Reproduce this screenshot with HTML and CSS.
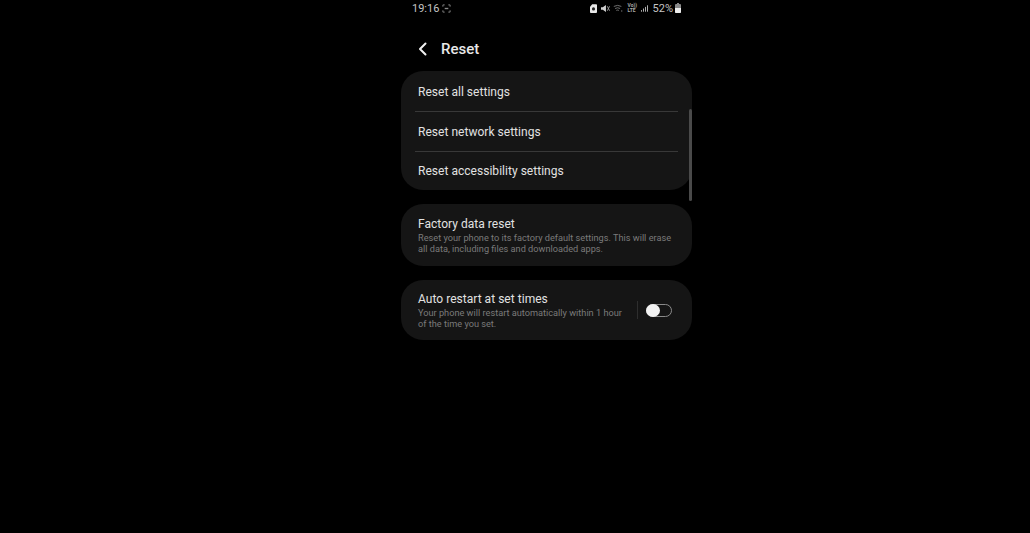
FILE: index.html
```html
<!DOCTYPE html>
<html lang="en">
<head>
    <meta charset="UTF-8">
    <meta name="viewport" content="width=device-width, initial-scale=1.0">
    <title>Reset</title>
    <link rel="stylesheet" href="styles.css">
</head>
<body>
    <div class="phone">
        <div class="status-bar">
            <div class="status-left">
                <span>19:16</span>
                <svg width="9" height="9" viewBox="0 0 10 10" fill="none" stroke="#8a8a8a" stroke-width="1">
                    <path d="M1 3V1h2M7 1h2v2M9 7v2H7M3 9H1V7"/>
                    <path d="M3 5h4" stroke-width="1.500"/>
                </svg>
            </div>
            <div class="status-right">
                <svg width="7" height="9" viewBox="0 0 8 10"><path d="M2.500 0H7a1 1 0 0 1 1 1v8a1 1 0 0 1-1 1H1a1 1 0 0 1-1-1V3z" fill="#e8e8e8"/><circle cx="4" cy="5.500" r="1.800" fill="#222"/></svg>
                <svg class="mute" width="9" height="9" viewBox="0 0 10 10" fill="#d0d0d0"><path d="M0 3.500h2L5.500 1v8L2 6.500H0z"/><path d="M7 2.500l2.500 5M9.500 2.500L7 7.500" stroke="#a0a0a0" stroke-width="1"/></svg>
                <svg width="10" height="9" viewBox="0 0 12 10" fill="none" stroke="#858585" stroke-width="1"><path d="M1 2.500q4.500-2.500 9 0M2.500 5q3-1.800 6 0M4 7.300q1.500-.8 3 0"/><path d="M10.500 7v2" stroke="#777"/></svg>
                <div class="volte">
                    <span>Vo))</span>
                    <span>LTE</span>
                </div>
                <svg width="8" height="9" viewBox="0 0 10 10" fill="#b5b5b5"><rect x="0" y="7" width="1.200" height="2"/><rect x="2.500" y="5" width="1.200" height="4"/><rect x="5" y="3" width="1.200" height="6"/><rect x="7.500" y="1" width="1.200" height="8"/></svg>
                <span class="battery-text">52%</span>
                <svg width="6" height="10" viewBox="0 0 6 10"><path d="M2 0h2v1h1a1 1 0 0 1 1 1v7a1 1 0 0 1-1 1H1a1 1 0 0 1-1-1V2a1 1 0 0 1 1-1h1z" fill="#8a8a8a"/><path d="M0 5h6v4a1 1 0 0 1-1 1H1a1 1 0 0 1-1-1z" fill="#ededed"/></svg>
            </div>
        </div>

        <div class="title-bar">
            <svg width="10" height="14" viewBox="0 0 10 14" fill="none" stroke="#f0f0f0" stroke-width="2" stroke-linecap="round" stroke-linejoin="round">
                <path d="M7.500 1.500L2 7l5.500 5.500"/>
            </svg>
            <h1>Reset</h1>
        </div>

        <div class="card card-list">
            <div class="row">Reset all settings</div>
            <div class="row">Reset network settings</div>
            <div class="row">Reset accessibility settings</div>
        </div>

        <div class="card card-info">
            <div class="info-title">Factory data reset</div>
            <div class="info-text">Reset your phone to its factory default settings. This will erase all data, including files and downloaded apps.</div>
        </div>

        <div class="card card-info card-switch">
            <div class="switch-text">
                <div class="info-title">Auto restart at set times</div>
                <div class="info-text">Your phone will restart automatically within 1 hour of the time you set.</div>
            </div>
            <div class="switch-wrap">
                <div class="switch"><div class="knob"></div></div>
            </div>
        </div>

        <div class="scrollbar"></div>
    </div>
</body>
</html>
```

FILE: styles.css
```css
* {
    margin: 0;
    padding: 0;
    box-sizing: border-box;
}

body {
    background: #000;
    font-family: Roboto, 'Liberation Sans', sans-serif;
    color: #ececec;
    height: 533px;
    overflow: hidden;
}

.phone {
    position: relative;
    width: 291px;
    margin-left: 401px;
}

.status-bar {
    display: flex;
    justify-content: space-between;
    align-items: center;
    height: 16px;
    padding: 0 11px 0 11px;
    font-size: 11px;
    color: #c4c4c4;
}

.status-left {
    display: flex;
    align-items: center;
    gap: 3px;
}

.status-right {
    display: flex;
    align-items: center;
    gap: 3px;
}

.mute {
    margin-left: 1px;
}

.volte {
    display: flex;
    flex-direction: column;
    width: 10px;
    font-size: 5px;
    line-height: 5px;
    font-weight: 700;
    color: #a8a8a8;
    white-space: nowrap;
    margin: 0 0 0 2px;
}

.battery-text {
    margin-left: 1px;
    margin-right: -1px;
    font-size: 11px;
}

.title-bar {
    display: flex;
    align-items: center;
    gap: 13px;
    height: 55px;
    padding: 10px 0 0 17px;
}

.title-bar h1 {
    font-size: 15px;
    font-weight: 500;
    color: #e8e8e8;
}

.card {
    background: #151515;
    border-radius: 22px;
    margin-bottom: 14px;
}

.card-list {
    padding-top: 1px;
}

.row {
    display: flex;
    align-items: center;
    height: 40px;
    margin: 0 14px;
    padding-left: 3px;
    font-size: 12px;
    letter-spacing: 0.03px;
    color: #e2e2e2;
    border-bottom: 1px solid #383838;
}

.row:last-child {
    height: 38px;
    border-bottom: none;
}

.card-info {
    padding: 14px 17px 11px;
    height: 62px;
}

.card-switch {
    display: flex;
    align-items: center;
    justify-content: space-between;
    height: 60px;
    padding: 12px 20px 10px 17px;
}

.info-title {
    font-size: 12px;
    letter-spacing: 0.03px;
    line-height: 13px;
    color: #e2e2e2;
}

.info-text {
    font-size: 9.200px;
    line-height: 11px;
    color: #7a7a7a;
    margin-top: 1px;
}

.switch-text {
    width: 208px;
}

.switch-wrap {
    display: flex;
    align-items: center;
    height: 18px;
    padding-left: 8px;
    border-left: 1px solid #2e2e2e;
    margin-top: -2px;
}

.switch {
    position: relative;
    width: 26px;
    height: 13px;
    border: 1px solid #8a8a8a;
    border-radius: 7px;
}

.knob {
    position: absolute;
    left: -1px;
    top: -1px;
    width: 14px;
    height: 13px;
    border-radius: 50%;
    background: #f2f2f2;
}

.scrollbar {
    position: absolute;
    left: 288px;
    top: 109px;
    width: 3px;
    height: 92px;
    border-radius: 2px;
    background: #4a4a4a;
}
```
